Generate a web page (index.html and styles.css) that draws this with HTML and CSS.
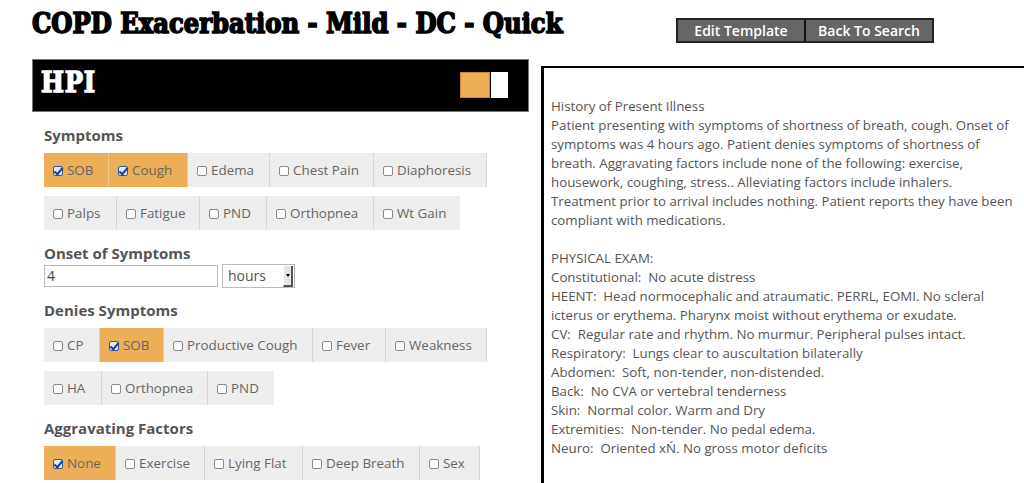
FILE: index.html
```html
<!DOCTYPE html>
<html>
<head>
<meta charset="utf-8">
<link rel="stylesheet" href="styles.css">
</head>
<body>
<header class="top">
  <h1 class="title">COPD Exacerbation - Mild - DC - Quick</h1>
  <div class="btns">
    <button class="btn">Edit Template</button>
    <button class="btn">Back To Search</button>
  </div>
</header>
<main class="main">
  <section class="left">
    <div class="hpi-bar">
      <span class="hpi-title">HPI</span>
      <span class="sq-orange"></span>
      <span class="sq-white"></span>
    </div>
    <div class="form">
      <div class="label l-symptoms">Symptoms</div>
      <div class="rows">
        <div class="row">
          <span class="chip on w-sob"><i class="cb"></i>SOB</span>
          <span class="chip on w-cough"><i class="cb"></i>Cough</span>
          <span class="chip w-edema"><i class="cb"></i>Edema</span>
          <span class="chip w-chest"><i class="cb"></i>Chest Pain</span>
          <span class="chip w-diaph"><i class="cb"></i>Diaphoresis</span>
        </div>
        <div class="row">
          <span class="chip w-palps"><i class="cb"></i>Palps</span>
          <span class="chip w-fatigue"><i class="cb"></i>Fatigue</span>
          <span class="chip w-pnd"><i class="cb"></i>PND</span>
          <span class="chip w-ortho"><i class="cb"></i>Orthopnea</span>
          <span class="chip w-wt"><i class="cb"></i>Wt Gain</span>
        </div>
      </div>
      <div class="label l-onset">Onset of Symptoms</div>
      <div class="onset">
        <div class="inp">4</div>
        <div class="sel"><span>hours</span><span class="sel-btn"><i class="tri"></i></span></div>
      </div>
      <div class="label l-denies">Denies Symptoms</div>
      <div class="rows">
        <div class="row">
          <span class="chip w-cp"><i class="cb"></i>CP</span>
          <span class="chip on w-sob2"><i class="cb"></i>SOB</span>
          <span class="chip w-prod"><i class="cb"></i>Productive Cough</span>
          <span class="chip w-fever"><i class="cb"></i>Fever</span>
          <span class="chip w-weak"><i class="cb"></i>Weakness</span>
        </div>
        <div class="row">
          <span class="chip w-ha"><i class="cb"></i>HA</span>
          <span class="chip w-ortho2"><i class="cb"></i>Orthopnea</span>
          <span class="chip w-pnd2"><i class="cb"></i>PND</span>
        </div>
      </div>
      <div class="label l-aggr">Aggravating Factors</div>
      <div class="rows">
        <div class="row">
          <span class="chip on w-none"><i class="cb"></i>None</span>
          <span class="chip w-exer"><i class="cb"></i>Exercise</span>
          <span class="chip w-lying"><i class="cb"></i>Lying Flat</span>
          <span class="chip w-deep"><i class="cb"></i>Deep Breath</span>
          <span class="chip w-sex"><i class="cb"></i>Sex</span>
        </div>
      </div>
    </div>
  </section>
  <section class="note">
    <p>History of Present Illness<br>Patient presenting with symptoms of shortness of breath, cough. Onset of symptoms was 4 hours ago. Patient denies symptoms of shortness of breath. Aggravating factors include none of the following: exercise, housework, coughing, stress.. Alleviating factors include inhalers.<br>Treatment prior to arrival includes nothing. Patient reports they have been compliant with medications.</p>
    <p class="pe">PHYSICAL EXAM:<br>Constitutional:&nbsp; No acute distress<br>HEENT:&nbsp; Head normocephalic and atraumatic. PERRL, EOMI. No scleral icterus or erythema. Pharynx moist without erythema or exudate.<br>CV:&nbsp; Regular rate and rhythm. No murmur. Peripheral pulses intact.<br>Respiratory:&nbsp; Lungs clear to auscultation bilaterally<br>Abdomen:&nbsp; Soft, non-tender, non-distended.<br>Back:&nbsp; No CVA or vertebral tenderness<br>Skin:&nbsp; Normal color. Warm and Dry<br>Extremities:&nbsp; Non-tender. No pedal edema.<br>Neuro:&nbsp; Oriented xŃ. No gross motor deficits</p>
  </section>
</main>
</body>
</html>
```
FILE: styles.css
```css
* { box-sizing: border-box; }
html, body { margin: 0; padding: 0; background: #fff; overflow: hidden; }
body { font-family: "Open Sans", "Liberation Sans", sans-serif; color: #555; width: 1024px; height: 483px; }

.top { display: flex; align-items: flex-start; height: 59px; }
.title {
  margin: 8px 0 0 32px;
  font-family: "DejaVu Serif Condensed", "DejaVu Serif", serif;
  font-weight: 900;
  font-size: 27px;
  line-height: 32px;
  color: #000;
  letter-spacing: 0px;
  -webkit-text-stroke: 1.5px #000;
  white-space: nowrap;
  width: 644px;
}
.btns {
  display: flex;
  margin-top: 18px;
  background: #111;
  border: 2px solid #222;
  gap: 2px;
}
.btn {
  font-family: "Open Sans", sans-serif;
  font-weight: 600;
  font-size: 14px;
  color: #fff;
  background: #666;
  border: 0;
  height: 21px;
  line-height: 21px;
  padding: 0;
  margin: 0;
}
.btn:first-child { width: 126px; }
.btn:last-child { width: 126px; }

.main { display: flex; align-items: flex-start; gap: 12px; padding-left: 32px; }
.left { width: 497px; flex: none; }

.hpi-bar {
  height: 53px;
  background: #000;
  border: 1px solid #777;
  display: flex;
  align-items: center;
  padding-left: 8px;
}
.hpi-title {
  font-family: "DejaVu Serif Condensed", "DejaVu Serif", serif;
  font-weight: 900;
  font-size: 27px;
  color: #fff;
  -webkit-text-stroke: 1.3px #fff;
  letter-spacing: 0.8px;
  margin-top: -6px;
  flex: 1;
}
.sq-orange { width: 30px; height: 26px; background: #ecae56; border: 1px solid #c98a30; margin-top: -2px; }
.sq-white { width: 17px; height: 26px; background: #fff; margin-left: 1px; margin-right: 20px; margin-top: -2px; }

.form { padding-left: 12px; }
.label { font-weight: 700; font-size: 15px; line-height: 20px; color: #555; }
.l-symptoms { margin-top: 13px; margin-bottom: 8px; }
.l-onset { margin-top: 13px; margin-bottom: 1px; }
.l-denies { margin-top: 12px; margin-bottom: 8px; }
.l-aggr { margin-top: 13px; margin-bottom: 8px; }

.rows { display: flex; flex-direction: column; gap: 9px; }
.row { display: flex; }
.chip {
  display: flex;
  align-items: center;
  height: 34px;
  padding-left: 9px;
  background: #eee;
  border-right: 1px solid #d6d6d6;
  font-size: 13.4px;
  color: #666;
  white-space: nowrap;
}
.chip.on { background: #ecae56; border-right-color: #f2c98c; }
.cb {
  display: inline-block;
  width: 10px;
  height: 10px;
  border: 1px solid #8a8a8a;
  border-radius: 2px;
  background: #fff;
  margin-right: 4px;
  margin-top: 2px;
  position: relative;
}
.chip.on .cb { border-color: #2a5aa8; background: #dfe8f6; }
.chip.on .cb::after {
  content: "";
  position: absolute;
  left: 2px;
  top: -1px;
  width: 3px;
  height: 7px;
  border: solid #1b3f8a;
  border-width: 0 2px 2px 0;
  transform: rotate(40deg);
}

.w-sob { width: 65px; } .w-cough { width: 79px; } .w-edema { width: 82px; } .w-chest { width: 104px; } .w-diaph { width: 113px; }
.w-palps { width: 73px; } .w-fatigue { width: 83px; } .w-pnd { width: 67px; } .w-ortho { width: 107px; } .w-wt { width: 86px; border-right: 0; }
.w-cp { width: 56px; } .w-sob2 { width: 64px; } .w-prod { width: 149px; } .w-fever { width: 73px; } .w-weak { width: 101px; }
.w-ha { width: 58px; } .w-ortho2 { width: 106px; } .w-pnd2 { width: 66px; border-right: 0; }
.w-none { width: 72px; } .w-exer { width: 89px; } .w-lying { width: 98px; } .w-deep { width: 117px; } .w-sex { width: 60px; }

.onset { display: flex; gap: 4px; align-items: center; }
.inp {
  width: 174px; height: 22px;
  border: 1px solid #bbb;
  font-size: 14px; line-height: 20px; padding-left: 2px; color: #444;
}
.sel {
  width: 73px; height: 24px;
  border: 1px solid #bbb;
  display: flex; justify-content: space-between; align-items: stretch;
  font-size: 14px; line-height: 22px; padding-left: 5px; color: #555;
}
.sel-btn { width: 10px; background: #e6e6e6; border-left: 1px solid #fff; border-right: 2px solid #555; border-bottom: 2px solid #555; display: flex; align-items: center; justify-content: center; margin: 1px 1px 0 0; }
.tri { width: 0; height: 0; border-left: 2px solid transparent; border-right: 2px solid transparent; border-top: 3px solid #000; }

.note {
  margin-top: 7px;
  flex: none;
  width: 520px;
  height: 430px;
  border-top: 2px solid #000;
  border-left: 3px solid #000;
  padding: 29px 0 0 7px;
  font-size: 13.3px;
  line-height: 19px;
  color: #555;
}
.note p { margin: 0; width: 468px; }
.note .pe { margin-top: 19px; }
```
